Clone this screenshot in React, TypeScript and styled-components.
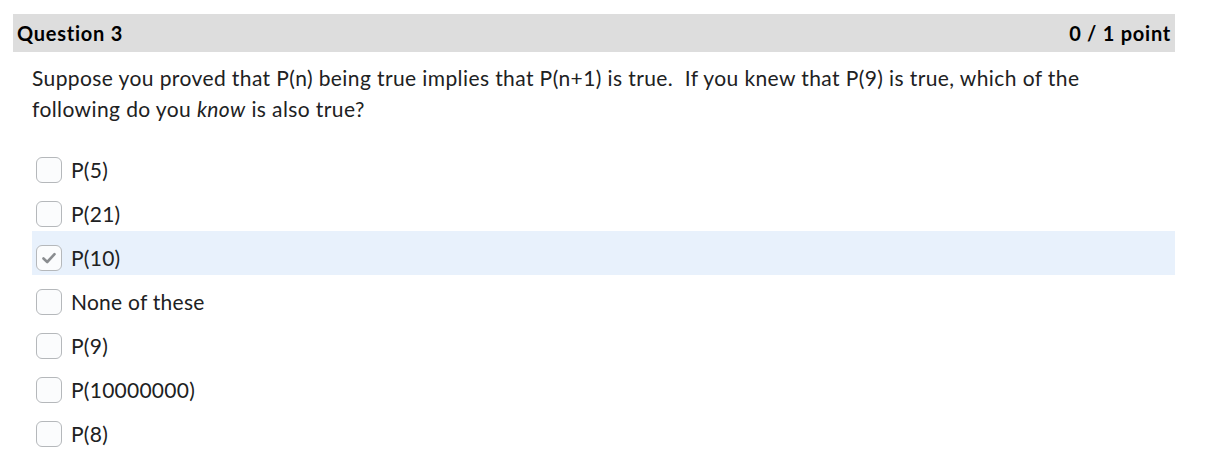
import styled, { createGlobalStyle } from "styled-components";

const GlobalStyle = createGlobalStyle`
  body {
    margin: 0;
    background: #ffffff;
    font-family: Lato, "Noto Sans", sans-serif;
    color: #202122;
  }
`;

const options = [
  { label: "P(5)", checked: false },
  { label: "P(21)", checked: false },
  { label: "P(10)", checked: true },
  { label: "None of these", checked: false },
  { label: "P(9)", checked: false },
  { label: "P(10000000)", checked: false },
  { label: "P(8)", checked: false },
];

const App = () => {
  return (
    <Page>
      <GlobalStyle />
      <Header>
        <Title>Question 3</Title>
        <Score>0 / 1 point</Score>
      </Header>
      <Body>
        <Prompt>
          Suppose you proved that P(n) being true implies that P(n+1) is true.&nbsp; If you knew that P(9) is
          true, which of the following do you <em>know</em> is also true?
        </Prompt>
        <List>
          {options.map((o) => (
            <Row key={o.label} selected={o.checked}>
              <Box>
                {o.checked && (
                  <svg width="16" height="16" viewBox="0 0 16 16">
                    <path d="M2.5 8.5 L6.2 12 L13.5 4.2" fill="none" stroke="#8a8d90" strokeWidth="2.6" strokeLinecap="round" strokeLinejoin="round" />
                  </svg>
                )}
              </Box>
              <Label>{o.label}</Label>
            </Row>
          ))}
        </List>
      </Body>
    </Page>
  );
};

export default App;

const Page = styled.div`
  width: 1162px;
  padding: 14px 0 0 13px;
`;

const Header = styled.div`
  height: 38px;
  background-color: #dddddd;
  display: flex;
  align-items: center;
  justify-content: space-between;
  padding: 0 4px;
  font-size: 20px;
  letter-spacing: 0.75px;
  font-weight: 700;
  color: #000000;
`;

const Title = styled.div``;

const Score = styled.div``;

const Body = styled.div`
  padding: 10px 0 0 19px;
`;

const Prompt = styled.p`
  margin: 0;
  font-size: 21px;
  letter-spacing: 0.4px;
  line-height: 31px;
  max-width: 1075px;
  color: #202122;

  em {
    font-style: italic;
  }
`;

const List = styled.div`
  margin-top: 19px;
  display: flex;
  flex-direction: column;
`;

const Row = styled.div<{ selected: boolean }>`
  height: 44px;
  box-sizing: border-box;
  display: flex;
  align-items: flex-start;
  gap: 9px;
  padding: 13.5px 0 0 4px;
  background-color: ${(p) => (p.selected ? "#e8f1fc" : "transparent")};
`;

const Box = styled.div`
  flex: none;
  width: 26px;
  height: 26px;
  box-sizing: border-box;
  border: 1px solid #b5b8bb;
  border-radius: 6px;
  background: #fbfcfd;
  display: flex;
  align-items: center;
  justify-content: center;
`;

const Label = styled.span`
  font-size: 21px;
  letter-spacing: 0.25px;
  line-height: 26px;
  color: #202122;
`;
